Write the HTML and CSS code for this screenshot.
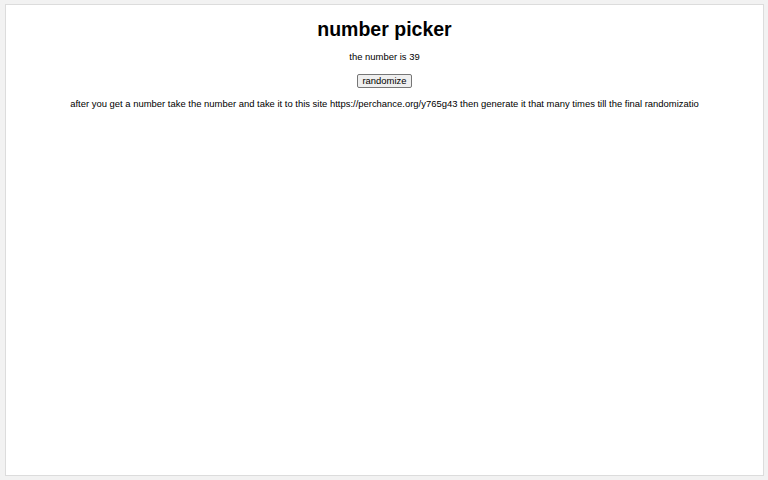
FILE: index.html
```html
<!DOCTYPE html>
<html lang="en">
<head>
<meta charset="UTF-8">
<meta name="viewport" content="width=device-width, initial-scale=1.0">
<title>number picker</title>
<link rel="stylesheet" href="styles.css">
</head>
<body>
<div class="page">
<h1 class="title">number picker</h1>
<p class="result">the number is <span id="num">39</span></p>
<button class="btn" id="rand">randomize</button>
<p class="note">after you get a number take the number and take it to this site https://perchance.org/y765g43 then generate it that many times till the final randomizatio</p>
</div>

    <script>
        document.getElementById("rand").addEventListener("click", () => {
            document.getElementById("num").textContent = Math.floor(Math.random() * 100) + 1;
        });
    </script>
</body>
</html>
```

FILE: styles.css
```css
        body {
            font-family: "Liberation Sans", Arial, sans-serif;
            margin: 0;
            background-color: #f2f2f2;
            height: 100vh;
            padding: 4px 4px 4px 5px;
            box-sizing: border-box;
        }

        .page {
            background-color: white;
            border: 1px solid #dcdcdc;
            height: 100%;
            box-sizing: border-box;
            text-align: center;
            padding-top: 13px;
            color: black;
        }

        .title {
            font-size: 19.5px;
            font-weight: bold;
            margin: 0 0 10px;
        }

        .result {
            font-size: 9.45px;
            margin: 0 0 8px;
        }

        .btn {
            font-family: inherit;
            font-size: 9.45px;
            padding: 0 4px;
            height: 14px;
            border: 1px solid #767676;
            border-radius: 2px;
            background-color: #efefef;
            color: black;
        }

        .note {
            font-size: 9.45px;
            margin: 10px 0 0;
        }
```
